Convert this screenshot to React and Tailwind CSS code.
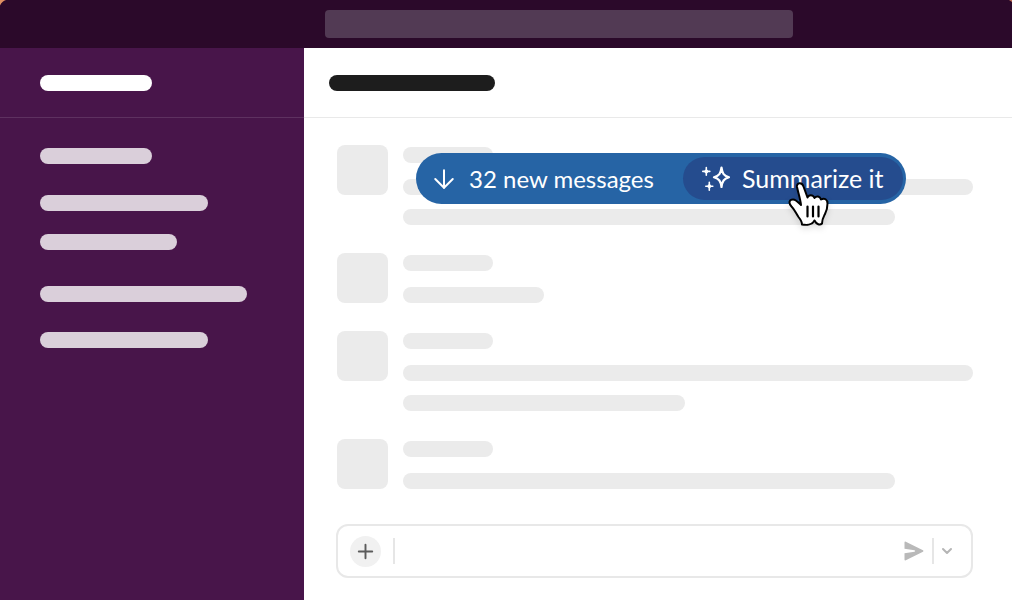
import clsx from 'clsx';
import { ArrowDown, ChevronDown, Plus } from 'lucide-react';

const channels = [
    { id: 1, className: 'w-28' },
    { id: 2, className: 'mt-[31px] w-[168px]' },
    { id: 3, className: 'mt-[23px] w-[137px]' },
    { id: 4, className: 'mt-9 w-[207px]' },
    { id: 5, className: 'mt-[30px] w-[168px]' },
];

const messages = [
    { id: 1, lines: ['w-full', 'w-[492px]'] },
    { id: 2, lines: ['w-[141px]'] },
    { id: 3, lines: ['w-full', 'w-[282px]'] },
    { id: 4, lines: ['w-[492px]'] },
];

function Bar({ className }) {
    return <div className={clsx('h-4 max-w-full rounded-full', className)} />;
}

function TopBar() {
    return (
        <header className="relative flex h-12 items-start bg-[#2b092a] pl-[325px] pt-[10px]">
            {/* Backdrop showing behind the rounded window corner */}
            <svg className="absolute left-0 top-0 h-[6px] w-[6px]" viewBox="0 0 6 6" aria-hidden="true">
                <path d="M0 0H6Q2 1 0 5.500Z" fill="#e09062" />
            </svg>
            <svg className="absolute right-0 top-0 h-[2px] w-[3px]" viewBox="0 0 3 2" aria-hidden="true">
                <path d="M0 0H3V2Z" fill="#c0705a" />
            </svg>
            <input
                type="search"
                aria-label="Search"
                className="h-7 w-[468px] rounded bg-[#523a54] px-3 text-sm text-white outline-none"
            />
        </header>
    );
}

function Sidebar() {
    return (
        <aside className="w-[304px] shrink-0 bg-[#48154a]">
            <div className="flex h-[70px] items-center border-b border-[#5e3160] pl-10">
                <Bar className="w-28 bg-white" />
            </div>
            <nav aria-label="Channels" className="pl-10 pt-[30px]">
                {channels.map(channel => (
                    <Bar key={channel.id} className={clsx('bg-[#dacfda]', channel.className)} />
                ))}
            </nav>
        </aside>
    );
}

function Message({ lines }) {
    return (
        <li className="flex gap-[15px]">
            <div className="h-[50px] w-[51px] shrink-0 rounded-lg bg-[#ebebeb]" />
            <div className="min-w-0 flex-1 pt-[2px]">
                <Bar className="w-[90px] bg-[#ebebeb]" />
                <div className="mt-4 space-y-[14px]">
                    {lines.map(width => (
                        <Bar key={width} className={clsx('bg-[#ebebeb]', width)} />
                    ))}
                </div>
            </div>
        </li>
    );
}

function SparkleIcon() {
    return (
        <svg className="h-7 w-7" viewBox="0 0 28 28" fill="none" aria-hidden="true">
            <path
                d="M19.500 2.500C20.300 8.500 21.800 10.700 27 12.300C21.800 13.900 20.300 16.100 19.500 22C18.700 16.100 17.200 13.900 12 12.300C17.200 10.700 18.700 8.500 19.500 2.500Z"
                stroke="white"
                strokeWidth="2.200"
                strokeLinejoin="round"
            />
            <path d="M4.300 2.500V10.300M.800 6.400H7.800M7.300 17.300V25.200M3.800 21.200H10.800" stroke="white" strokeWidth="1.600" strokeLinecap="round" />
            <circle cx="4.300" cy="6.400" r="1.900" fill="white" />
            <circle cx="7.300" cy="21.200" r="1.900" fill="white" />
        </svg>
    );
}

function HandCursor() {
    return (
        <svg
            className="pointer-events-none absolute left-[103px] top-6 h-[48px] w-[44px] drop-shadow-md"
            viewBox="0 0 44 48"
            fill="none"
            aria-hidden="true"
        >
            <path
                d="M16 43.500C16 40.500 14.500 38.500 12.500 36C10 32.500 8.500 28.500 5.500 25.500C2 21.500 3.500 18.500 7 18.500C10 18.500 12.500 21.500 15 24C14.500 18.500 12 11 11 6C10.300 1.500 16 .800 17.500 5.500L21.500 16.500C22.500 13.500 27 13 28.500 17C30.500 14.500 34 15 35 18.500C38.500 16.500 41.500 18.500 41.500 22.500C41.500 27 40.800 29.500 39 33C37.500 36 36 38 36 42.500C34 44.500 30.500 43.500 28.500 39.500C26.500 43.500 21 44.500 16 43.500Z"
                fill="white"
                stroke="black"
                strokeWidth="2"
                strokeLinejoin="round"
            />
            <path d="M21.500 25.500V35.500M27 25.500V35.500M32.500 25.500V35.500" stroke="black" strokeWidth="2.200" strokeLinecap="round" />
        </svg>
    );
}

function NewMessagesPill() {
    return (
        <div className="absolute left-28 top-[35px] flex h-[51px] w-[490px] items-center justify-between rounded-full bg-[#2664a5] pr-[3px] text-white">
            <button type="button" className="flex h-full items-center gap-[10px] pl-[13px] text-2xl">
                <ArrowDown className="h-[30px] w-[30px]" strokeWidth={1.6} />
                32 new messages
            </button>
            <div className="relative">
                <button type="button" className="flex h-[43px] w-[220px] items-center gap-3 rounded-full bg-[#254c8e] pl-[19px] text-[25px]">
                    <SparkleIcon />
                    Summarize it
                </button>
                <HandCursor />
            </div>
        </div>
    );
}

function Composer() {
    return (
        <form
            onSubmit={(e) => e.preventDefault()}
            className="mt-[35px] flex h-[54px] items-center rounded-xl border-2 border-[#e8e8e8] bg-white pl-3 pr-4"
        >
            <button type="button" aria-label="Add attachment" className="flex h-[31px] w-[31px] shrink-0 items-center justify-center rounded-full bg-[#f1f1f1]">
                <Plus className="h-[23px] w-[23px] text-[#5c5c5c]" strokeWidth={2} />
            </button>
            <div className="ml-3 h-[26px] w-[2px] shrink-0 bg-[#e6e6e6]" />
            <input type="text" aria-label="Message" className="h-9 min-w-0 flex-1 px-3 outline-none" />
            <button type="submit" aria-label="Send" className="shrink-0">
                <svg className="h-5 w-5" viewBox="0 0 20 20" fill="#b9b9b9" aria-hidden="true">
                    <path d="M.500 1.500Q.500 .300 1.800 .700L19 9.200Q20 10 19 10.800L1.800 19.300Q.500 19.700 .500 18.500V12.200L10.500 10.700Q12 10 10.500 9.300L.500 7.800Z" />
                </svg>
            </button>
            <div className="ml-2 h-[26px] w-[2px] shrink-0 bg-[#e6e6e6]" />
            <button type="button" aria-label="Send options" className="ml-[5px] shrink-0">
                <ChevronDown className="h-4 w-4 text-[#b5b5b5]" strokeWidth={3} />
            </button>
        </form>
    );
}

export default function App() {
    return (
        <div className="flex min-h-screen flex-col bg-white font-['Lato',sans-serif]">
            <TopBar />
            <div className="flex flex-1">
                <Sidebar />
                <main className="min-w-0 flex-1">
                    <div className="flex h-[70px] items-center border-b border-[#e9e9e9] pl-[25px]">
                        <Bar className="w-[166px] bg-[#1d1d1d]" />
                    </div>
                    <section className="relative pb-5 pl-8 pr-[39px] pt-[27px]">
                        <ul className="space-y-7 pl-px">
                            {messages.map(message => (
                                <Message key={message.id} lines={message.lines} />
                            ))}
                        </ul>
                        <NewMessagesPill />
                        <Composer />
                    </section>
                </main>
            </div>
        </div>
    );
}
